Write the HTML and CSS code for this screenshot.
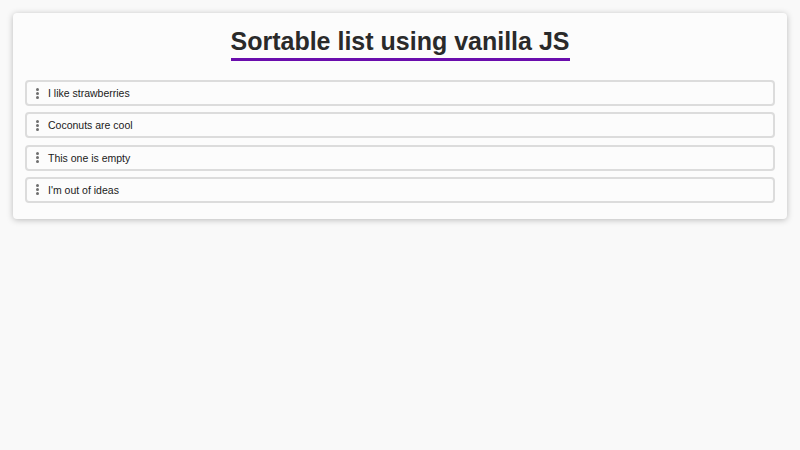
FILE: index.html
```html
<html>
<head>
    <meta charset="utf-8">
    <link rel="stylesheet" href="styles.css">
</head>
<body>
    <div class="card">
        <h1 class="title">Sortable list using vanilla JS</h1>
        <ul class="sortable-list">
            <li class="item" draggable="true">
                <span class="handle"><i></i><i></i><i></i></span>
                <span class="label">I like strawberries</span>
            </li>
            <li class="item" draggable="true">
                <span class="handle"><i></i><i></i><i></i></span>
                <span class="label">Coconuts are cool</span>
            </li>
            <li class="item" draggable="true">
                <span class="handle"><i></i><i></i><i></i></span>
                <span class="label">This one is empty</span>
            </li>
            <li class="item" draggable="true">
                <span class="handle"><i></i><i></i><i></i></span>
                <span class="label">I'm out of ideas</span>
            </li>
        </ul>
    </div>
</body>
</html>
```

FILE: styles.css
```css
:root {
    --page-bg: #f9f9f9;
    --card-bg: #fcfcfc;
    --text: #2a2a2a;
    --accent: #6a0dad;
    --border: #dcdcdc;
}

body {
    font-family: 'Liberation Sans', Arial, sans-serif;
    background-color: var(--page-bg);
    color: var(--text);
    margin: 0;
    padding: 13px;
}

.card {
    background-color: var(--card-bg);
    border-radius: 4px;
    box-shadow: 0 1px 6px rgba(0, 0, 0, 0.25);
    padding: 12px 12px 16px;
}

.title {
    width: max-content;
    margin: 0 auto 19px;
    font-size: 25px;
    line-height: 32px;
    font-weight: bold;
    color: var(--text);
    border-bottom: 3px solid var(--accent);
    padding-bottom: 1px;
}

.sortable-list {
    list-style: none;
    margin: 0;
    padding: 0;
    display: flex;
    flex-direction: column;
    gap: 6.33px;
}

.item {
    display: flex;
    align-items: center;
    gap: 9px;
    height: 22px;
    padding: 0 9px;
    border: 2px solid var(--border);
    border-radius: 4px;
    background-color: var(--card-bg);
    font-size: 10.5px;
    color: #1a1a1a;
    cursor: move;
}

.handle {
    display: flex;
    flex-direction: column;
    gap: 1px;
}

.handle i {
    width: 3px;
    height: 3px;
    border-radius: 50%;
    background-color: #6e6e6e;
}
```
